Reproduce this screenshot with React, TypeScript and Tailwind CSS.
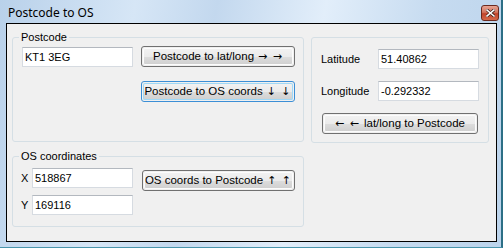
import React from "react";

const font = { fontFamily: '"Liberation Sans", Arial, sans-serif' };
const arrowFont = { fontFamily: '"DejaVu Sans", sans-serif' };

function TextBox({ value, w }: { value: string; w: string }) {
  return (
    <div
      className={`${w} h-[20px] bg-white border border-[#d6dbe1] border-t-[#b3b8bf] flex items-center pl-[2px] text-[11px] text-black leading-none`}
    >
      {value}
    </div>
  );
}

function Btn({ children, focused, w }: { children: React.ReactNode; focused?: boolean; w: string }) {
  return (
    <div
      className={`${w} h-[21px] rounded-[3px] border ${
        focused ? "border-[#3c8fd6]" : "border-[#707070]"
      } p-[1px]`}
    >
      <div
        className={`w-full h-full rounded-[2px] flex items-center justify-center text-[11.5px] text-black leading-none bg-[linear-gradient(#f2f2f2_0%,#ebebeb_50%,#dddddd_51%,#cfcfcf_100%)] ${
          focused ? "shadow-[inset_0_0_0_1px_#9fd8f6]" : "shadow-[inset_0_0_0_1px_#fcfcfc]"
        }`}
      >
        {children}
      </div>
    </div>
  );
}

function Arrows({ a }: { a: string }) {
  return (
    <span className="text-[11px] ml-[4px] tracking-[1px]" style={arrowFont}>
      {a}
    </span>
  );
}

function Group({ label, className, children }: { label?: string; className: string; children: React.ReactNode }) {
  return (
    <div className={`relative border border-[#d5dfe5] rounded-[3px] ${className}`}>
      {label && (
        <span className="absolute left-[6px] top-[-7px] bg-[#f0f0f0] px-[2px] text-[11px] leading-[12px] text-black">
          {label}
        </span>
      )}
      {children}
    </div>
  );
}

export default function App() {
  return (
    <div
      className="w-[503px] h-[248px] flex flex-col bg-[linear-gradient(100deg,#b9d1ea_0%,#d6e6f6_25%,#c3d8ee_40%,#e2eefa_60%,#c6dbf0_80%,#bcd4ec_100%)] border-r-[2px] border-r-[#2c6f86] border-b-[1px] border-b-[#4a95ad] relative"
      style={font}
    >
      <div className="h-[23px] flex items-center pl-[8px] shrink-0">
        <span
          className="text-[12px] text-black leading-none mt-[3px]"
          style={{ fontFamily: '"Noto Sans", "Open Sans", sans-serif' }}
        >
          Postcode to OS
        </span>
      </div>
      <div className="absolute left-[481px] top-[5px] w-[18px] h-[16px] rounded-[3px] border border-[#6b2a1f] bg-[linear-gradient(#e8a593_0%,#d2745e_45%,#c0432a_55%,#d5694a_100%)] flex items-center justify-center">
        <svg width="9" height="8" viewBox="0 0 9 8">
          <path d="M1 1 L8 7 M8 1 L1 7" stroke="#3a1a14" strokeWidth="3" strokeLinecap="square" />
          <path d="M1 1 L8 7 M8 1 L1 7" stroke="#ffffff" strokeWidth="1.6" strokeLinecap="square" />
        </svg>
      </div>

      <div className="ml-[6px] mr-[4px] h-[219px] border border-black bg-[#f0f0f0] pt-[13px] pl-[5px] flex gap-[7px]">
        <div className="flex flex-col gap-[14px]">
          <Group label="Postcode" className="w-[292px] h-[105px] pl-[9px] pt-[8px]">
            <div className="flex gap-[8px]">
              <div className="mt-[1px]">
                <TextBox value="KT1 3EG" w="w-[111px]" />
              </div>
              <div className="flex flex-col gap-[14px]">
                <Btn w="w-[154px]">
                  Postcode to lat/long<Arrows a="→ →" />
                </Btn>
                <Btn w="w-[154px]" focused>
                  Postcode to OS coords<Arrows a="↓ ↓" />
                </Btn>
              </div>
            </div>
          </Group>
          <Group label="OS coordinates" className="w-[292px] h-[71px] pl-[8px] pt-[11px]">
            <div className="flex">
              <div className="flex flex-col gap-[7px]">
                <div className="flex items-center">
                  <span className="w-[11px] text-[11px] text-black">X</span>
                  <TextBox value="518867" w="w-[101px]" />
                </div>
                <div className="flex items-center">
                  <span className="w-[11px] text-[11px] text-black">Y</span>
                  <TextBox value="169116" w="w-[101px]" />
                </div>
              </div>
              <div className="ml-[9px] mt-[2px]">
                <Btn w="w-[153px]">
                  OS coords to Postcode<Arrows a="↑ ↑" />
                </Btn>
              </div>
            </div>
          </Group>
        </div>
        <Group className="w-[178px] h-[106px] pl-[9px] pt-[11px] flex flex-col">
          <div className="flex items-center">
            <span className="w-[57px] text-[11px] text-black">Latitude</span>
            <TextBox value="51.40862" w="w-[101px]" />
          </div>
          <div className="flex items-center mt-[12px]">
            <span className="w-[57px] text-[11px] text-black">Longitude</span>
            <TextBox value="-0.292332" w="w-[101px]" />
          </div>
          <div className="mt-[12px] ml-[1px]">
            <Btn w="w-[156px]">
              <span className="text-[11px] mr-[4px] tracking-[1px]" style={arrowFont}>
                ← ←
              </span>
              lat/long to Postcode
            </Btn>
          </div>
        </Group>
      </div>
    </div>
  );
}
